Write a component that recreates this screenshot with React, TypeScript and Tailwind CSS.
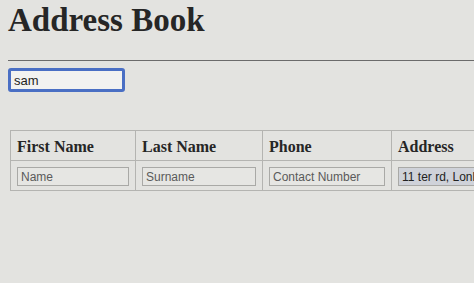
export default function App() {
  const cols = [
    { head: "First Name", placeholder: "Name", value: "", w: "w-[125px]" },
    { head: "Last Name", placeholder: "Surname", value: "", w: "w-[127px]" },
    { head: "Phone", placeholder: "Contact Number", value: "", w: "w-[129px]" },
    { head: "Address", placeholder: "Address", value: "11 ter rd, Lonldon", w: "w-[140px]" },
  ];

  return (
    <div className="h-[283px] w-[474px] overflow-hidden bg-[#e3e3e0] pl-[8px] text-[#222]">
      <h1 className="pt-[2px] font-['Liberation_Serif',serif] text-[33px] font-bold leading-[36px] text-[#262626]">
        Address Book
      </h1>
      <div className="mt-[22px] h-[1px] w-[600px] bg-[#6b6b6b]" />
      <input
        className="mt-[7px] h-[24px] w-[117px] rounded-[3px] border-[3px] border-[#4a6fc4] bg-[#f2f2f0] px-[3px] font-['Liberation_Sans',sans-serif] text-[13px] text-[#222] outline-none"
        defaultValue="sam"
      />
      <table className="mt-[38px] ml-[2px] w-[521px] table-fixed border-collapse font-['Liberation_Serif',serif]">
        <thead>
          <tr>
            {cols.map((c) => (
              <th
                key={c.head}
                className={`${c.w} h-[30px] border border-[#b4b4b1] px-[6px] pt-[2px] text-left text-[16px] font-bold text-[#262626]`}
              >
                {c.head}
              </th>
            ))}
          </tr>
        </thead>
        <tbody>
          <tr>
            {cols.map((c) => (
              <td key={c.head} className="h-[30px] border border-[#b4b4b1] px-[6px]">
                <input
                  className={`h-[19px] w-full border border-[#a9a9a6] px-[3px] font-['Liberation_Sans',sans-serif] text-[12px] outline-none placeholder:text-[#5a5a5a] ${
                    c.value ? "bg-[#cfd2d9] text-[#222]" : "bg-[#e6e6e3]"
                  }`}
                  placeholder={c.placeholder}
                  defaultValue={c.value}
                />
              </td>
            ))}
          </tr>
        </tbody>
      </table>
    </div>
  );
}
